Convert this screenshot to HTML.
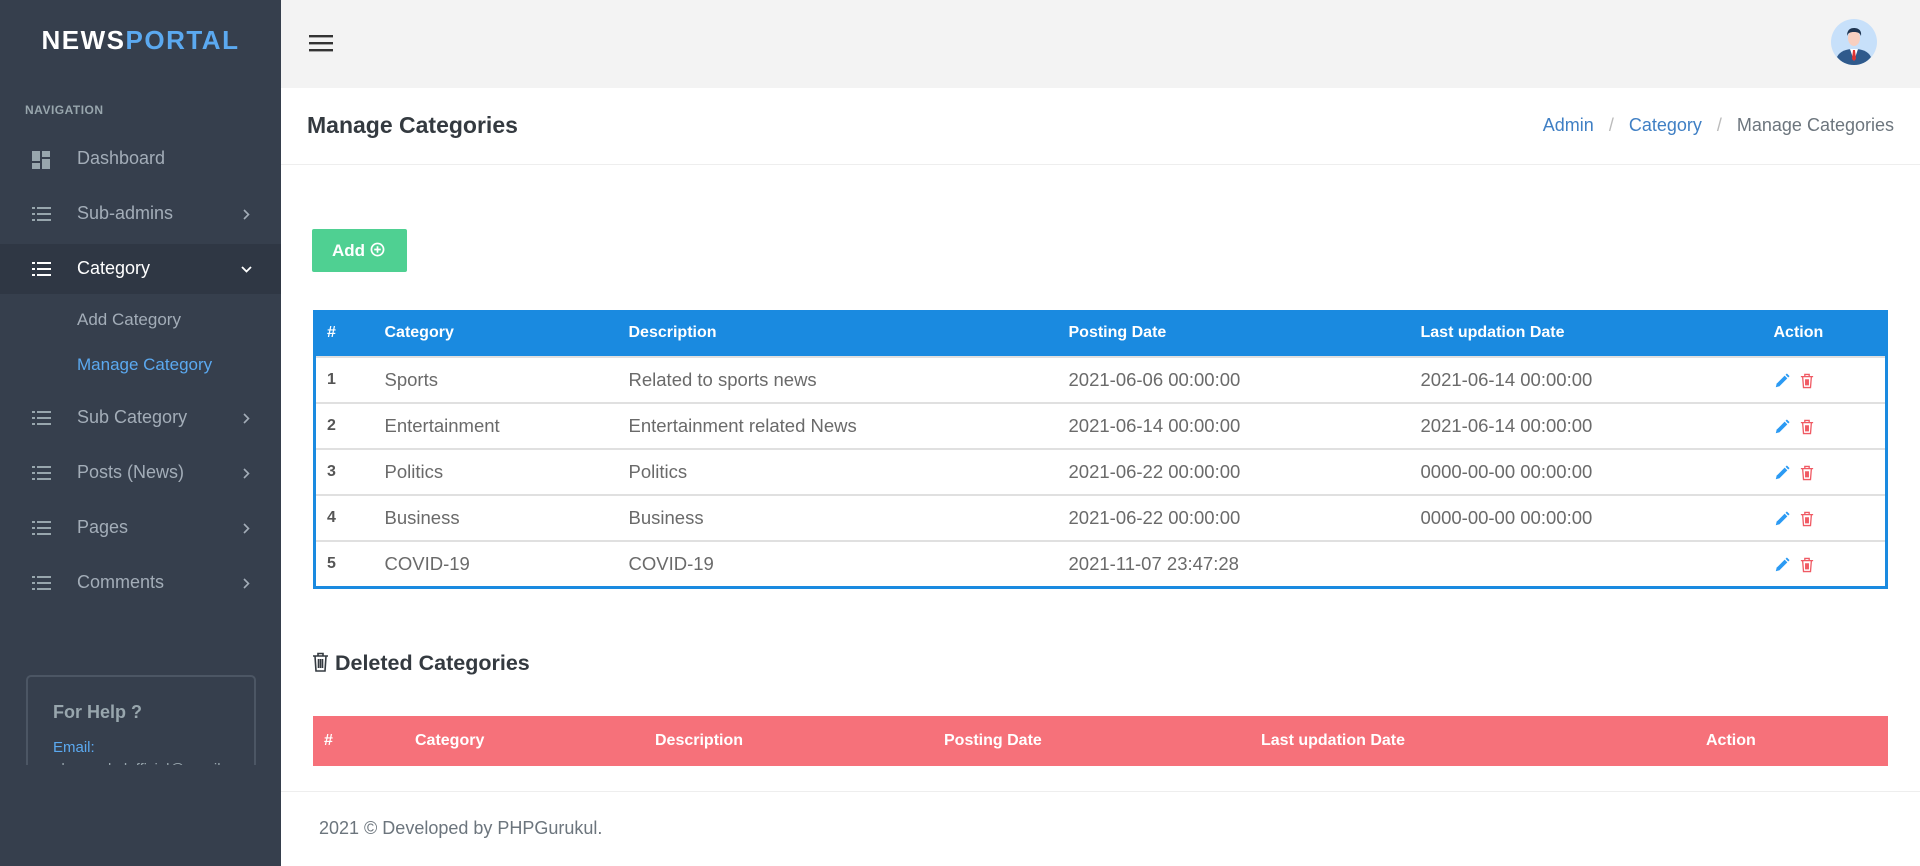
<!DOCTYPE html>
<html><head><meta charset="utf-8"><style>
*{box-sizing:border-box;margin:0;padding:0}
body{width:1920px;height:866px;overflow:hidden;font-family:"Liberation Sans",sans-serif;background:#fff;position:relative}
.sb{position:absolute;left:0;top:0;width:281px;height:866px;background:#363f4d}
.logo{position:absolute;top:25px;left:0;width:281px;text-align:center;font-size:26px;font-weight:bold;letter-spacing:1.5px;color:#fff}
.logo span{color:#5ba9f0}
.navl{position:absolute;left:25px;top:103px;font-size:12px;font-weight:bold;color:#98a6ad;letter-spacing:.5px}
.mi{position:absolute;left:0;width:281px;height:50px;color:#a3adb8;font-size:18px}
.mi .t{position:absolute;left:77px;top:14px}
.mi .ic{position:absolute;left:32px;top:17px}
.mi .ch{position:absolute;left:243px;top:20px}
.act{background:#2f3744;color:#fff}
.sub{position:absolute;left:77px;font-size:17px;color:#a3adb8}
.help{position:absolute;left:26px;top:675px;width:230px;height:110px;border:2px solid #4c5664;border-radius:5px;border-bottom:none}
.clip{position:absolute;left:0;top:765px;width:281px;height:101px;background:#363f4d}
.top{position:absolute;left:281px;top:0;right:0;height:88px;background:#f3f3f3}
.tb{position:absolute;left:281px;top:88px;right:0;height:77px;background:#fff;border-bottom:1px solid #eee}
.tb h1{position:absolute;left:26px;top:24px;font-size:23px;color:#343a40;font-weight:bold}
.bc{position:absolute;right:26px;top:27px;font-size:18px;color:#6c757d}
.bc a{color:#3f7fc4;text-decoration:none}
.bc i{font-style:normal;color:#bbb;margin:0 15px}
.add{position:absolute;left:312px;top:229px;width:95px;height:43px;background:#4fd092;color:#fff;font-weight:bold;font-size:17px;border-radius:2px;padding:12px 0 0 20px}
table{border-collapse:collapse;position:absolute;left:313px;width:1575px;table-layout:fixed}
th{color:#fff;font-size:16px;text-align:left;font-weight:bold}
td{color:#6a6a6a;font-size:18.5px;height:46px;border-top:2px solid #e0e0e0;background:#fff}
td.n{font-weight:bold;color:#555;font-size:16px}
.t1{top:310px;border:3px solid #1a8ae0;border-top:none}
.t1 th{background:#1a8ae0;height:47px}
.t2{top:716px}
.t2 th{background:#f6717a;height:50px}
.dh{position:absolute;left:312px;top:651px;font-size:21.5px;font-weight:bold;color:#343a40}
.foot{position:absolute;left:281px;top:791px;right:0;height:75px;background:#fff;border-top:1px solid #eee}
.foot div{position:absolute;left:38px;top:26px;font-size:18px;color:#6c757d}
</style></head><body>
<div class="sb">
<div class="logo">NEWS<span>PORTAL</span></div>
<div class="navl">NAVIGATION</div>
<div class="mi" style="top:134px"><svg class="ic" width="19" height="18" viewBox="0 0 19 18" fill="#98a6ad"><rect x="0" y="0" width="8" height="10"/><rect x="10" y="0" width="8" height="6"/><rect x="0" y="12" width="8" height="6"/><rect x="10" y="8" width="8" height="10"/></svg><span class="t">Dashboard</span></div>
<div class="mi" style="top:189px"><svg class="ic" width="19" height="16" fill="#98a6ad"><rect x="0" y="1" width="3" height="2"/><rect x="5" y="1" width="14" height="2"/><rect x="0" y="7" width="3" height="2"/><rect x="5" y="7" width="14" height="2"/><rect x="0" y="13" width="3" height="2"/><rect x="5" y="13" width="14" height="2"/></svg><span class="t">Sub-admins</span><svg class="ch" width="7" height="11"><path d="M1 1l4.5 4.5L1 10" stroke="#a3adb8" stroke-width="1.6" fill="none"/></svg></div>
<div class="mi act" style="top:244px"><svg class="ic" width="19" height="16" fill="#fff"><rect x="0" y="1" width="3" height="2"/><rect x="5" y="1" width="14" height="2"/><rect x="0" y="7" width="3" height="2"/><rect x="5" y="7" width="14" height="2"/><rect x="0" y="13" width="3" height="2"/><rect x="5" y="13" width="14" height="2"/></svg><span class="t">Category</span><svg style="position:absolute;left:241px;top:22px" width="11" height="7"><path d="M1 1l4.5 4.5L10 1" stroke="#fff" stroke-width="1.8" fill="none"/></svg></div>
<div class="sub" style="top:310px">Add Category</div>
<div class="sub" style="top:355px;color:#5ba9f0">Manage Category</div>
<div class="mi" style="top:393px"><svg class="ic" width="19" height="16" fill="#98a6ad"><rect x="0" y="1" width="3" height="2"/><rect x="5" y="1" width="14" height="2"/><rect x="0" y="7" width="3" height="2"/><rect x="5" y="7" width="14" height="2"/><rect x="0" y="13" width="3" height="2"/><rect x="5" y="13" width="14" height="2"/></svg><span class="t">Sub Category</span><svg class="ch" width="7" height="11"><path d="M1 1l4.5 4.5L1 10" stroke="#a3adb8" stroke-width="1.6" fill="none"/></svg></div>
<div class="mi" style="top:448px"><svg class="ic" width="19" height="16" fill="#98a6ad"><rect x="0" y="1" width="3" height="2"/><rect x="5" y="1" width="14" height="2"/><rect x="0" y="7" width="3" height="2"/><rect x="5" y="7" width="14" height="2"/><rect x="0" y="13" width="3" height="2"/><rect x="5" y="13" width="14" height="2"/></svg><span class="t">Posts (News)</span><svg class="ch" width="7" height="11"><path d="M1 1l4.5 4.5L1 10" stroke="#a3adb8" stroke-width="1.6" fill="none"/></svg></div>
<div class="mi" style="top:503px"><svg class="ic" width="19" height="16" fill="#98a6ad"><rect x="0" y="1" width="3" height="2"/><rect x="5" y="1" width="14" height="2"/><rect x="0" y="7" width="3" height="2"/><rect x="5" y="7" width="14" height="2"/><rect x="0" y="13" width="3" height="2"/><rect x="5" y="13" width="14" height="2"/></svg><span class="t">Pages</span><svg class="ch" width="7" height="11"><path d="M1 1l4.5 4.5L1 10" stroke="#a3adb8" stroke-width="1.6" fill="none"/></svg></div>
<div class="mi" style="top:558px"><svg class="ic" width="19" height="16" fill="#98a6ad"><rect x="0" y="1" width="3" height="2"/><rect x="5" y="1" width="14" height="2"/><rect x="0" y="7" width="3" height="2"/><rect x="5" y="7" width="14" height="2"/><rect x="0" y="13" width="3" height="2"/><rect x="5" y="13" width="14" height="2"/></svg><span class="t">Comments</span><svg class="ch" width="7" height="11"><path d="M1 1l4.5 4.5L1 10" stroke="#a3adb8" stroke-width="1.6" fill="none"/></svg></div>
<div class="help"><div style="position:absolute;left:25px;top:25px;font-size:18px;font-weight:bold;color:#98a6ad">For Help ?</div><div style="position:absolute;left:25px;top:62px;font-size:15px;color:#5ba9f0">Email:</div><div style="position:absolute;left:25px;top:84px;font-size:15px;color:#98a6ad">phpgurukulofficial@gmail</div></div>
<div class="clip"></div>
</div>
<div class="top">
<svg style="position:absolute;left:28px;top:35px" width="24" height="17"><rect y="0" width="24" height="2.4" fill="#333"/><rect y="7" width="24" height="2.4" fill="#333"/><rect y="14" width="24" height="2.4" fill="#333"/></svg>
<svg style="position:absolute;left:1550px;top:19px" width="46" height="46" viewBox="0 0 46 46"><circle cx="23" cy="23" r="23" fill="#c7e0fa"/><path d="M6 38c3-6 9-8 17-8s14 2 17 8c-4 5-10 8-17 8S10 43 6 38z" fill="#2f5a8c"/><path d="M19 30h8l-4 12z" fill="#fff"/><path d="M22 31h2l1 9-2 2-2-2z" fill="#d33"/><ellipse cx="23" cy="19" rx="6" ry="8" fill="#f8cfc0"/><path d="M16 17c0-6 3-8 7-8s8 2 7 8c-1-3-3-4-7-4s-6 1-7 4z" fill="#1f3552"/></svg>
</div>
<div class="tb"><h1>Manage Categories</h1><div class="bc"><a>Admin</a><i>/</i><a>Category</a><i>/</i>Manage Categories</div></div>
<div class="add">Add <svg width="15" height="15" viewBox="0 0 16 16" style="vertical-align:-1px"><circle cx="8" cy="8" r="6.5" stroke="#fff" stroke-width="1.8" fill="none"/><path d="M8 4.5v7M4.5 8h7" stroke="#fff" stroke-width="1.8"/></svg></div>
<table class="t1">
<colgroup><col style="width:70px"><col style="width:244px"><col style="width:440px"><col style="width:352px"><col style="width:353px"><col></colgroup>
<tr><th style="padding-left:11px">#</th><th>Category</th><th>Description</th><th>Posting Date</th><th>Last updation Date</th><th>Action</th></tr>
<tr><td class="n" style="padding-left:11px">1</td><td>Sports</td><td>Related to sports news</td><td>2021-06-06 00:00:00</td><td>2021-06-14 00:00:00</td><td>ACT</td></tr>
<tr><td class="n" style="padding-left:11px">2</td><td>Entertainment</td><td>Entertainment related News</td><td>2021-06-14 00:00:00</td><td>2021-06-14 00:00:00</td><td>ACT</td></tr>
<tr><td class="n" style="padding-left:11px">3</td><td>Politics</td><td>Politics</td><td>2021-06-22 00:00:00</td><td>0000-00-00 00:00:00</td><td>ACT</td></tr>
<tr><td class="n" style="padding-left:11px">4</td><td>Business</td><td>Business</td><td>2021-06-22 00:00:00</td><td>0000-00-00 00:00:00</td><td>ACT</td></tr>
<tr><td class="n" style="padding-left:11px">5</td><td>COVID-19</td><td>COVID-19</td><td>2021-11-07 23:47:28</td><td></td><td>ACT</td></tr>
</table>
<div class="dh"><svg width="17" height="20" viewBox="0 0 17 20" style="vertical-align:-2px"><path d="M1 4h15M6 4V1.5h5V4M3 4l1 15h9l1-15M6.5 7v9M8.5 7v9M10.5 7v9" stroke="#343a40" stroke-width="1.6" fill="none"/></svg> Deleted Categories</div>
<table class="t2">
<colgroup><col style="width:102px"><col style="width:240px"><col style="width:289px"><col style="width:317px"><col style="width:445px"><col></colgroup>
<tr><th style="padding-left:11px">#</th><th>Category</th><th>Description</th><th>Posting Date</th><th>Last updation Date</th><th>Action</th></tr>
</table>
<div class="foot"><div>2021 © Developed by PHPGurukul.</div></div>
<script>
document.querySelectorAll('td').forEach(function(t){if(t.textContent==='ACT'){t.innerHTML='<svg width="16" height="16" viewBox="0 0 18 18" style="vertical-align:-3px"><path d="M2 16l1-4 9-9 3 3-9 9z" fill="#2b9af3"/><path d="M13 2l1.5-1.5 3 3L16 5z" fill="#2b9af3"/></svg><svg width="14" height="16" viewBox="0 0 16 18" style="margin-left:10px;vertical-align:-3px"><path d="M1 4h14M5.5 4V1.5h5V4M3 4l1 12.5h8L13 4M6.5 7v7M8 7v7M9.5 7v7" stroke="#f05a64" stroke-width="1.5" fill="none"/></svg>';}});
</script>
</body></html>
